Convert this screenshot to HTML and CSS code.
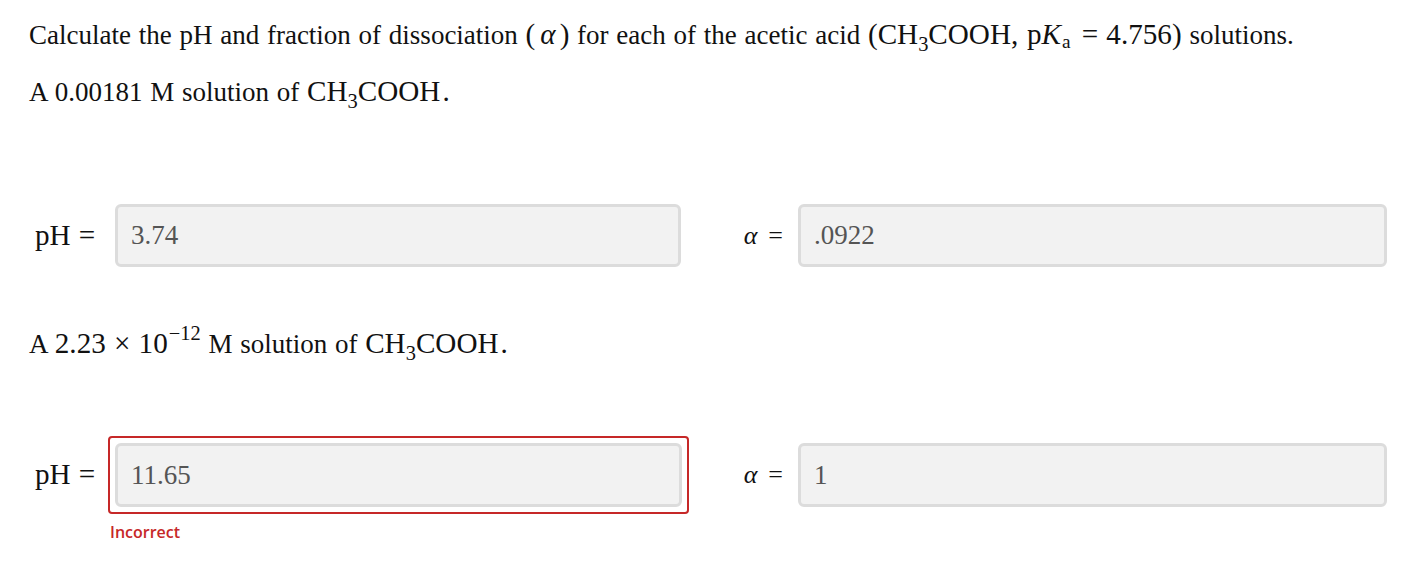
FILE: index.html
```html
<!DOCTYPE html>
<html>
<head>
<meta charset="utf-8">
<link rel="stylesheet" href="styles.css">
</head>
<body>
<div class="page">
  <p class="line first">Calculate the pH and fraction of dissociation <span class="m">(<i class="al">α</i>)</span> for each of the acetic acid <span class="m">(CH<sub>3</sub>COOH,<span class="thin"></span>p<i>K</i><sub class="a">a</sub><span class="rel">=</span>4.756)</span> solutions.</p>
  <p class="line second">A 0.00181 M solution of <span class="m">CH<sub>3</sub>COOH<span class="dot">.</span></span></p>

  <div class="row row1">
    <div class="lab lab-l"><span class="m">pH<span class="rel">=</span></span></div>
    <div class="cell-l">
      <div class="box">3.74</div>
    </div>
    <div class="lab lab-r"><span class="ma"><i>α</i><span class="rel">=</span></span></div>
    <div class="cell-r">
      <div class="box">.0922</div>
    </div>
  </div>

  <p class="line third">A <span class="m">2.23<span class="rel">×</span>10<sup>−12</sup></span> M solution of <span class="m">CH<sub>3</sub>COOH<span class="dot">.</span></span></p>

  <div class="row row2">
    <div class="lab lab-l"><span class="m">pH<span class="rel">=</span></span></div>
    <div class="cell-l">
      <div class="wrong">
        <div class="box">11.65</div>
      </div>
      <div class="msg">Incorrect</div>
    </div>
    <div class="lab lab-r"><span class="ma"><i>α</i><span class="rel">=</span></span></div>
    <div class="cell-r">
      <div class="box">1</div>
    </div>
  </div>
</div>
</body>
</html>
```
FILE: styles.css
```css
html, body {
  margin: 0;
  padding: 0;
  background: #ffffff;
}
.page {
  padding-left: 29px;
  font-family: "Liberation Serif", "Times New Roman", serif;
  font-size: 27px;
  color: #111;
}
.line {
  margin: 0;
  line-height: 32px;
  white-space: nowrap;
  word-spacing: 1px;
}
.first { padding-top: 19px; }
.second { margin-top: 25px; }
.third { margin-top: 61px; }
.m {
  font-size: 1.08em;
  line-height: 1;
}
.al {
  margin: 0 4px 0 5px;
}
.thin {
  display: inline-block;
  width: 0.3em;
}
.rel {
  margin: 0 0.28em;
}
.dot {
  margin-left: 2px;
}
sub {
  font-size: 0.7em;
  vertical-align: -0.32em;
  line-height: 0;
}
sub.a {
  font-size: 0.66em;
  vertical-align: -0.22em;
  margin-left: 1px;
  margin-right: 3px;
}
sup {
  font-size: 0.7em;
  vertical-align: 0.62em;
  line-height: 0;
  margin-left: 1px;
}
.row {
  display: grid;
  grid-template-columns: 86px 566px 117px 589px;
  align-items: start;
}
.row1 { margin-top: 96px; }
.row2 { margin-top: 76px; }
.lab {
  height: 63px;
  display: flex;
  align-items: center;
}
.lab-l { padding-left: 6px; }
.lab-l .rel { margin-right: 0; }
.lab-r {
  justify-content: flex-end;
  padding-right: 15px;
}
.ma {
  font-size: 26px;
}
.ma .rel { margin-right: 0; margin-left: 0.42em; }
.row2 .lab { margin-top: 7px; height: 64px; }
.row2 .cell-r { margin-top: 7px; }
.box {
  box-sizing: border-box;
  height: 63px;
  border: 3px solid #dcdcdc;
  border-radius: 6px;
  background: #f2f2f2;
  color: #555;
  padding-left: 13px;
  display: flex;
  align-items: center;
}
.row2 .box { height: 64px; }
.wrong {
  margin: 0 -8px 0 -7px;
  padding: 5px;
  border: 2px solid #c62828;
  border-radius: 4px;
}
.msg {
  margin-left: -5px;
  margin-top: 8px;
  font-family: "Open Sans", "Liberation Sans", sans-serif;
  font-weight: 600;
  font-size: 16px;
  line-height: 20px;
  color: #c62828;
}
```
